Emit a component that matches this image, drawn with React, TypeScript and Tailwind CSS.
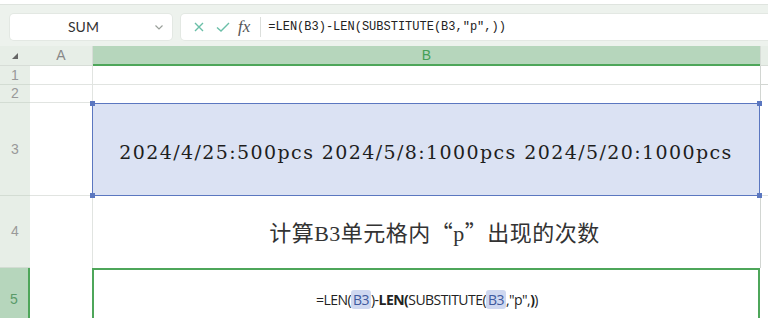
import React from 'react';

const serif = { fontFamily: '"DejaVu Serif", "Liberation Serif", "Noto Sans CJK SC", serif' };

// Highlighted cell reference inside the edited formula
const Ref = ({ children }: { children: React.ReactNode }) => (
  <span className="rounded-[3px] bg-[#cfd8f0] px-[2px] text-[#3f5a9e]">{children}</span>
);

const Handle = ({ className }: { className: string }) => (
  <span className={`absolute h-[5px] w-[5px] bg-[#5b77c0] ${className}`} />
);

const Quote = ({ children }: { children: React.ReactNode }) => (
  <span className="font-['Noto_Sans_CJK_SC',sans-serif]">{children}</span>
);

export default function App() {
  return (
    <div className="h-[318px] w-[768px] overflow-hidden bg-[#edf2ed] font-['Liberation_Sans',sans-serif] text-[#333]">
      {/* Top edge of the ribbon */}
      <div className="h-[5px] border-b border-[#dfe4df] bg-white" />

      {/* Name box + formula bar */}
      <div className="flex h-[41px] items-center gap-[9px] pl-[10px] pt-[2px]">
        <div className="flex h-[26px] w-[162px] items-center rounded-[4px] bg-white pl-[58px] pr-[6px] shadow-[0_0_0_1px_#e3e8e3]">
          <span className="flex-1 font-['Lato',sans-serif] text-[14px] text-[#333]">SUM</span>
          <svg width="12" height="12" viewBox="0 0 12 12" className="mr-[1px]">
            <path d="M2.5 4.5 L6 8 L9.5 4.5" fill="none" stroke="#9aa09a" strokeWidth="1.2" />
          </svg>
        </div>
        <div className="flex h-[26px] flex-1 items-center rounded-l-[4px] bg-white pl-[11px] shadow-[0_0_0_1px_#e3e8e3]">
          <svg width="14" height="14" viewBox="0 0 14 14">
            <path d="M3 3 L11 11 M11 3 L3 11" stroke="#6bbfa8" strokeWidth="1.4" fill="none" />
          </svg>
          <svg width="16" height="14" viewBox="0 0 16 14" className="ml-[9px]">
            <path d="M2 7.5 L6 11 L14 3" stroke="#6bbfa8" strokeWidth="1.4" fill="none" />
          </svg>
          <span className="ml-[7px] font-['Liberation_Serif',serif] text-[17px] italic text-[#555]">fx</span>
          <span className="ml-[10px] h-[20px] w-px bg-[#dcdfdc]" />
          <span className="ml-[7px] font-['Liberation_Mono',monospace] text-[12px] text-[#222]">
            =LEN(B3)-LEN(SUBSTITUTE(B3,″p″,))
          </span>
        </div>
      </div>

      {/* Sheet grid */}
      <div className="grid grid-cols-[30px_63px_667px_8px] grid-rows-[20px_19px_18px_93px_72px_50px] text-[13px]">
        {/* Header row */}
        <div className="flex items-center justify-center border-b border-[#d7ddd7] bg-[#e7eee7]">
          <svg width="8" height="8" viewBox="0 0 8 8"><path d="M7 1 L7 7 L1 7 Z" fill="#666" /></svg>
        </div>
        <div className="flex items-center justify-center border-b border-r border-[#d7ddd7] bg-[#e7eee7] text-[14px] text-[#888]">A</div>
        <div className="flex items-center justify-center border-b-2 border-[#4ea65a] bg-[#b6d6bc] text-[14px] text-[#45a056]">B</div>
        <div className="border-b border-l border-[#d7ddd7] bg-[#e7eee7]" />

        {/* Row 1 */}
        <div className="flex items-center justify-center border-b border-[#d3dcd3] bg-[#e7eee7] text-[14px] text-[#999]">1</div>
        <div className="border-b border-r border-[#e1e4e1] bg-white" />
        <div className="border-b border-[#e1e4e1] bg-white" />
        <div className="border-b border-l border-[#d2d6d2] bg-white" />

        {/* Row 2 */}
        <div className="flex items-center justify-center border-b border-[#d3dcd3] bg-[#e7eee7] text-[14px] text-[#999]">2</div>
        <div className="border-b border-r border-[#e1e4e1] bg-white" />
        <div className="bg-white" />
        <div className="border-l border-[#d2d6d2] bg-white" />

        {/* Row 3 */}
        <div className="flex items-center justify-center border-b border-[#d3dcd3] bg-[#e7eee7] text-[14px] text-[#999]">3</div>
        <div className="border-b border-[#e1e4e1] bg-white" />
        <div className="relative -ml-px flex items-center justify-center border border-[#5b77c0] bg-[#dbe2f3] pt-[6px]">
          <span style={serif} className="text-[19px] tracking-[1.4px] text-[#1e1e1e]">
            2024/4/25:500pcs 2024/5/8:1000pcs 2024/5/20:1000pcs
          </span>
          <Handle className="-left-[3px] -top-[3px]" />
          <Handle className="-right-[3px] -top-[3px]" />
          <Handle className="-bottom-[3px] -left-[3px]" />
          <Handle className="-bottom-[3px] -right-[3px]" />
        </div>
        <div className="border-b border-[#e1e4e1] bg-white" />

        {/* Row 4 */}
        <div className="flex items-center justify-center border-b border-[#d3dcd3] bg-[#e7eee7] text-[14px] text-[#999]">4</div>
        <div className="border-r border-[#e1e4e1] bg-white" />
        <div className="flex items-center justify-center bg-white pl-[16px]">
          <span className="font-['Liberation_Serif','Noto_Sans_CJK_SC',serif] text-[22px] tracking-[0.5px] text-[#333]">
            计算B3单元格内<Quote>“</Quote>p<Quote>”</Quote>出现的次数
          </span>
        </div>
        <div className="border-l border-[#d2d6d2] bg-white" />

        {/* Row 5 (active) */}
        <div className="flex items-center justify-center border-r-2 border-[#4ea65a] bg-[#b6d6bc] pt-[12px] text-[14px] text-[#5a9a68]">5</div>
        <div className="bg-white" />
        <div className="-ml-px flex items-center justify-center border-2 border-b-0 border-[#4ea65a] bg-white pl-[2px] pt-[10px]">
          <span className="font-['Open_Sans',sans-serif] text-[14px] tracking-[-0.55px] text-[#222]">
            =LEN(<Ref>B3</Ref>)-<b>LEN(</b>SUBSTITUTE(<Ref>B3</Ref>,"p",<b>)</b>)
          </span>
        </div>
        <div className="bg-white" />
      </div>
    </div>
  );
}
